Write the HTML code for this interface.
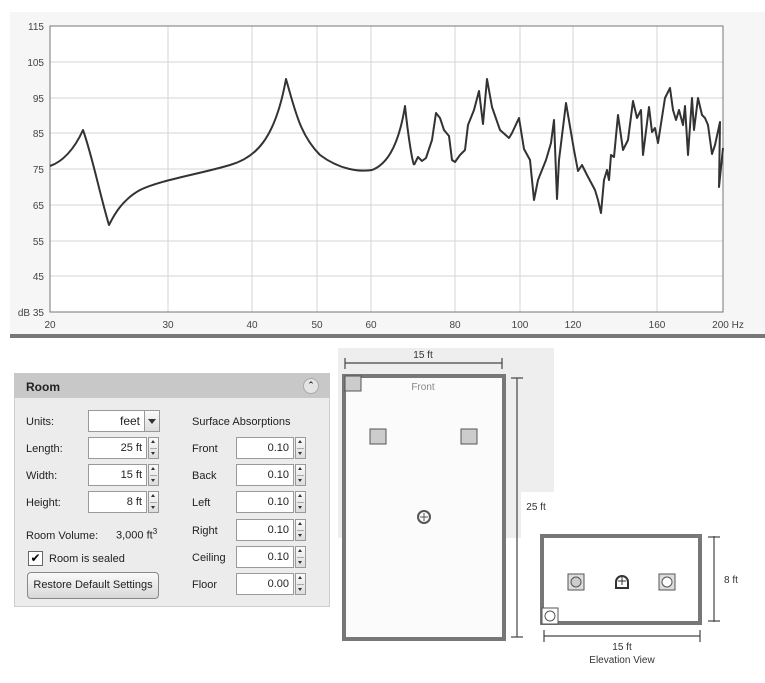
<!DOCTYPE html><html><head><style>
body{margin:0;width:765px;height:683px;background:#fff;font-family:"Liberation Sans",Arial,sans-serif;position:relative;overflow:hidden}
.a{position:absolute}
.lbl{position:absolute;font-size:11px;color:#222}
.inp{position:absolute;height:22px;background:#fff;border:1px solid #999;box-sizing:border-box;font-size:11px;text-align:right;line-height:20px;padding-right:4px;color:#222}
.sp{position:absolute;width:11px;height:22px;border:1px solid #999;box-sizing:border-box;background:linear-gradient(#fafafa,#ddd)}
.sp:before{content:"";position:absolute;left:2px;top:2px;border:2.5px solid transparent;border-bottom:3px solid #333;border-top:0}
.sp:after{content:"";position:absolute;left:2px;bottom:3px;border:2.5px solid transparent;border-top:3px solid #333;border-bottom:0}
.sp i{position:absolute;left:1px;right:1px;top:10px;border-top:1px solid #aaa}
</style></head><body>
<svg class="a" style="left:0;top:0" width="765" height="345">
<rect x="10" y="12" width="755" height="322" fill="#f6f6f6"/>
<rect x="50" y="26" width="673" height="286" fill="#fff"/>
<g stroke="#d4d4d4" stroke-width="1">
<line x1="50" x2="723" y1="62" y2="62"/><line x1="50" x2="723" y1="98" y2="98"/><line x1="50" x2="723" y1="133" y2="133"/><line x1="50" x2="723" y1="169" y2="169"/><line x1="50" x2="723" y1="205" y2="205"/><line x1="50" x2="723" y1="241" y2="241"/><line x1="50" x2="723" y1="276" y2="276"/>
<line x1="168" x2="168" y1="26" y2="312"/><line x1="252" x2="252" y1="26" y2="312"/><line x1="317" x2="317" y1="26" y2="312"/><line x1="371" x2="371" y1="26" y2="312"/><line x1="455" x2="455" y1="26" y2="312"/><line x1="520" x2="520" y1="26" y2="312"/><line x1="573" x2="573" y1="26" y2="312"/><line x1="657" x2="657" y1="26" y2="312"/>
</g>
<rect x="50" y="26" width="673" height="286" fill="none" stroke="#777"/>
<path fill="none" stroke="#333" stroke-width="2" stroke-linejoin="round" d="M50 166C62 162 74 150 83 130C92 155 100 195 109 225C114 215 122 200 140 190C160 180 200 174 230 165C255 158 275 140 286 79C295 110 300 135 320 155C340 170 360 172 372 170C385 165 398 150 405 106C408 135 412 160 414 165"/>
<polyline fill="none" stroke="#333" stroke-width="2" stroke-linejoin="round" points="414,165 418,157 422,161 426,158 432,140 436,113 440,118 444,130 449,136 452,160 455,162 460,155 465,150 468,125 474,110 479,91 483,124 487,79 492,107 500,130 509,138 512,133 519,118 524,149 530,160 534,200 538,180 546,160 551,143 554,120 557,199 559,160 566,103 574,150 578,171 582,165 587,175 595,190 598,200 601,213 604,180 607,170 609,180 611,155 614,157 618,115 623,150 628,140 633,101 637,118 641,110 643,155 649,107 652,132 655,128 658,143 665,98 670,88 673,110 676,120 679,110 683,125 685,106 688,155 692,98 694,130 698,98 702,115 705,118 708,125 712,154 715,145 720,122 719,187 723,148"/>
<g font-size="10" fill="#444" text-anchor="end">
<text x="44" y="30">115</text><text x="44" y="66">105</text><text x="44" y="102">95</text><text x="44" y="137">85</text><text x="44" y="173">75</text><text x="44" y="209">65</text><text x="44" y="245">55</text><text x="44" y="280">45</text><text x="44" y="316">dB 35</text>
</g>
<g font-size="10" fill="#444" text-anchor="middle">
<text x="50" y="328">20</text><text x="168" y="328">30</text><text x="252" y="328">40</text><text x="317" y="328">50</text><text x="371" y="328">60</text><text x="455" y="328">80</text><text x="520" y="328">100</text><text x="573" y="328">120</text><text x="657" y="328">160</text><text x="728" y="328">200 Hz</text>
</g>
<rect x="10" y="334" width="755" height="4" fill="#777"/>
</svg>

<div class="a" style="left:14px;top:373px;width:316px;height:234px;background:#ececec;border:1px solid #ccc;box-sizing:border-box"></div>
<div class="a" style="left:14px;top:373px;width:316px;height:25px;background:#c8c8c8"></div>
<div class="lbl" style="left:26px;top:380px;font-weight:bold;font-size:12px">Room</div>
<div class="a" style="left:303px;top:378px;width:14px;height:14px;border-radius:50%;background:#e4e4e4;border:1px solid #aaa;font-size:9px;text-align:center;line-height:13px">&#8963;</div>
<div class="lbl" style="left:26px;top:416px">Units:</div>
<div class="inp" style="left:88px;top:410px;width:57px;font-size:12px">feet</div>
<div class="a" style="left:144px;top:410px;width:16px;height:22px;border:1px solid #999;box-sizing:border-box;background:linear-gradient(#fafafa,#ddd)"><div style="position:absolute;left:3px;top:8px;border:4px solid transparent;border-top:5px solid #333;border-bottom:0"></div></div>
<div class="lbl" style="left:26px;top:443px">Length:</div><div class="inp" style="left:88px;top:437px;width:59px">25 ft</div><div class="sp" style="left:148px;top:437px"><i></i></div>
<div class="lbl" style="left:26px;top:470px">Width:</div><div class="inp" style="left:88px;top:464px;width:59px">15 ft</div><div class="sp" style="left:148px;top:464px"><i></i></div>
<div class="lbl" style="left:26px;top:497px">Height:</div><div class="inp" style="left:88px;top:491px;width:59px">8 ft</div><div class="sp" style="left:148px;top:491px"><i></i></div>
<div class="lbl" style="left:26px;top:530px">Room Volume:</div><div class="lbl" style="left:116px;top:527px">3,000 ft<sup style="font-size:8px">3</sup></div>
<div class="a" style="left:28px;top:551px;width:13px;height:13px;border:1px solid #666;background:#fff;font-size:12px;line-height:13px;text-align:center">&#10004;</div>
<div class="lbl" style="left:49px;top:553px">Room is sealed</div>
<div class="a" style="left:27px;top:572px;width:132px;height:27px;border:1px solid #888;border-radius:4px;box-sizing:border-box;background:linear-gradient(#fafafa,#d8d8d8);font-size:11px;text-align:center;line-height:25px;color:#222">Restore Default Settings</div>
<div class="lbl" style="left:192px;top:416px">Surface Absorptions</div>
<div class="lbl" style="left:192px;top:443px">Front</div><div class="inp" style="left:236px;top:437px;width:58px">0.10</div><div class="sp" style="left:295px;top:437px"><i></i></div>
<div class="lbl" style="left:192px;top:470px">Back</div><div class="inp" style="left:236px;top:464px;width:58px">0.10</div><div class="sp" style="left:295px;top:464px"><i></i></div>
<div class="lbl" style="left:192px;top:497px">Left</div><div class="inp" style="left:236px;top:491px;width:58px">0.10</div><div class="sp" style="left:295px;top:491px"><i></i></div>
<div class="lbl" style="left:192px;top:525px">Right</div><div class="inp" style="left:236px;top:519px;width:58px">0.10</div><div class="sp" style="left:295px;top:519px"><i></i></div>
<div class="lbl" style="left:192px;top:552px">Ceiling</div><div class="inp" style="left:236px;top:546px;width:58px">0.10</div><div class="sp" style="left:295px;top:546px"><i></i></div>
<div class="lbl" style="left:192px;top:579px">Floor</div><div class="inp" style="left:236px;top:573px;width:58px">0.00</div><div class="sp" style="left:295px;top:573px"><i></i></div>

<svg class="a" style="left:0;top:340px" width="765" height="343">
<rect x="338" y="8" width="216" height="144" fill="#eee"/>
<rect x="338" y="150" width="183" height="48" fill="#eee"/>
<rect x="344" y="36" width="160" height="263" fill="#fbfbfc" stroke="#777" stroke-width="4"/>
<g stroke="#444" stroke-width="1.2" fill="none">
<line x1="345" x2="502" y1="23" y2="23"/><line x1="345" x2="345" y1="18" y2="29"/><line x1="502" x2="502" y1="18" y2="29"/>
<line x1="517" x2="517" y1="38" y2="297"/><line x1="511" x2="523" y1="38" y2="38"/><line x1="511" x2="523" y1="297" y2="297"/>
<line x1="714" x2="714" y1="196" y2="282"/><line x1="708" x2="720" y1="197" y2="197"/><line x1="708" x2="720" y1="281" y2="281"/>
<line x1="544" x2="700" y1="296" y2="296"/><line x1="544" x2="544" y1="290" y2="302"/><line x1="700" x2="700" y1="290" y2="302"/>
</g>
<g font-size="10" fill="#333" text-anchor="middle">
<text x="423" y="18">15 ft</text><text x="536" y="170">25 ft</text><text x="731" y="243">8 ft</text><text x="622" y="310">15 ft</text><text x="622" y="323">Elevation View</text>
</g>
<text x="423" y="50" font-size="10" fill="#888" text-anchor="middle">Front</text>
<g fill="#ccc" stroke="#555"><rect x="345" y="36" width="16" height="15"/><rect x="370" y="89" width="16" height="15"/><rect x="461" y="89" width="16" height="15"/></g>
<g fill="none" stroke="#555"><circle cx="424" cy="177" r="6" stroke-width="2"/><path d="M424 173v8M420 177h8"/></g>
<rect x="542" y="196" width="158" height="87" fill="#fff" stroke="#777" stroke-width="4"/>
<g stroke="#555" fill="#ddd"><rect x="568" y="234" width="16" height="16"/><rect x="659" y="234" width="16" height="16"/><rect x="542" y="268" width="16" height="16" fill="#fff"/></g>
<g stroke="#555" fill="#fff"><circle cx="576" cy="242" r="5" fill="#ccc"/><circle cx="667" cy="242" r="5"/><circle cx="550" cy="276" r="5"/></g>
<path d="M616 242a6 6 0 0 1 12 0v6h-12z" fill="#fff" stroke="#333" stroke-width="2"/><path d="M622 237v8M618 241h8" stroke="#333"/>
</svg>
</body></html>
